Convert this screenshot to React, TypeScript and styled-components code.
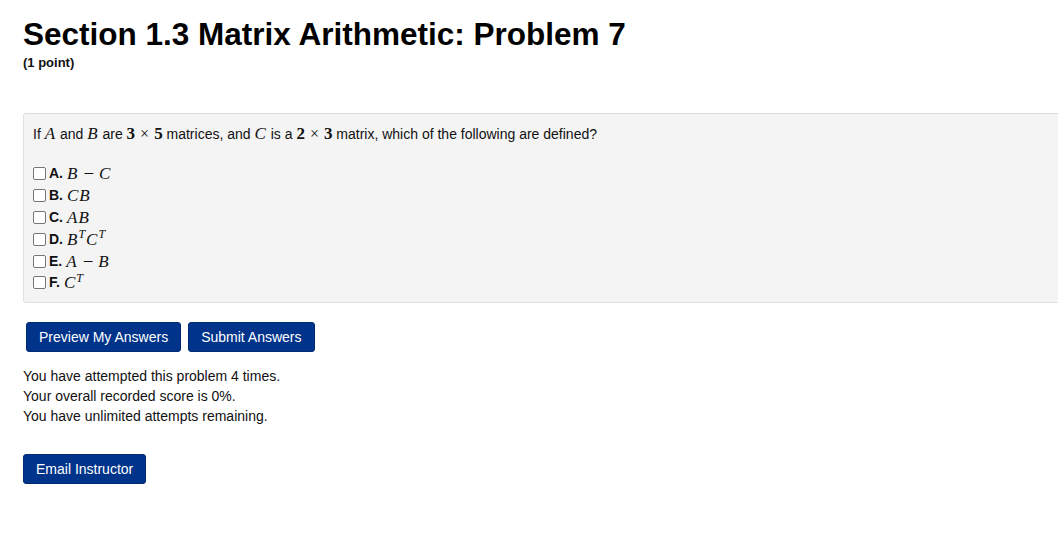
import React from "react";
import styled, { createGlobalStyle } from "styled-components";

const Global = createGlobalStyle`
  html, body { margin: 0; padding: 0; background: #fff; overflow: hidden; }
  body { font-family: "Liberation Sans", Arial, sans-serif; color: #111; }
`;

const Page = styled.div`
  width: 1100px;
  padding: 16px 0 40px 23px;
  box-sizing: border-box;
`;

const Title = styled.h1`
  margin: 0;
  font-size: 31.5px;
  font-weight: bold;
  line-height: 37px;
  color: #000;
`;

const Points = styled.div`
  margin-top: 3px;
  font-size: 13px;
  font-weight: bold;
  line-height: 14px;
`;

const Panel = styled.div`
  margin-top: 43px;
  background: #f4f4f4;
  border: 1px solid #e0e0e0;
  border-top-color: #dcdcdc;
  border-radius: 3px;
  padding: 9px 9px 8px 9px;
  font-size: 14px;
  line-height: 21px;
`;

const Question = styled.div`
  margin-bottom: 18px;
`;

const Options = styled.div`
  display: flex;
  flex-direction: column;
`;

const Option = styled.label`
  display: flex;
  align-items: center;
  height: 21.8px;
`;

const Box = styled.span`
  width: 11px;
  height: 11px;
  border: 1px solid #767676;
  border-radius: 2px;
  background: #fff;
  margin-right: 3px;
  flex: none;
`;

const Letter = styled.b`
  font-size: 14px;
  margin-right: 4px;
`;

const Var = styled.i`
  font-family: "Liberation Serif", "Times New Roman", serif;
  font-size: 17px;
  font-style: italic;
  padding-right: 1px;
`;

const Num = styled.span`
  font-family: "Liberation Serif", "Times New Roman", serif;
  font-size: 17px;
  font-weight: bold;
`;

const Op = styled.span<{ $w?: number; $s?: number }>`
  font-family: "Liberation Serif", "Times New Roman", serif;
  font-size: ${(p) => p.$s ?? 16}px;
  margin: 0 ${(p) => p.$w ?? 5}px;
`;

const Sup = styled.span`
  font-family: "Liberation Serif", "Times New Roman", serif;
  font-style: italic;
  font-size: 12px;
  line-height: 12px;
  position: relative;
  top: -5px;
  padding-right: 1px;
`;

const ButtonRow = styled.div`
  display: flex;
  gap: 7px;
  margin: 19px 0 0 3px;
`;

const Button = styled.button`
  height: 30px;
  padding: 0 12px;
  background: #00338a;
  color: #fff;
  border: 1px solid #002a72;
  border-radius: 3px;
  font-family: "Liberation Sans", Arial, sans-serif;
  font-size: 14px;
  cursor: pointer;
`;

const Info = styled.div`
  margin-top: 14px;
  font-size: 14px;
  line-height: 20px;
  color: #111;
`;

const EmailRow = styled.div`
  margin-top: 28px;
`;

const V = ({ children }: { children: React.ReactNode }) => <Var>{children}</Var>;

export default function App() {
  const options: [string, React.ReactNode][] = [
    ["A.", <><V>B</V><Op $w={5} $s={19}>−</Op><V>C</V></>],
    ["B.", <><V>C</V><V>B</V></>],
    ["C.", <><V>A</V><V>B</V></>],
    ["D.", <><V>B</V><Sup>T</Sup><V>C</V><Sup>T</Sup></>],
    ["E.", <><V>A</V><Op $w={5} $s={19}>−</Op><V>B</V></>],
    ["F.", <><V>C</V><Sup>T</Sup></>],
  ];
  return (
    <Page>
      <Global />
      <Title>Section 1.3 Matrix Arithmetic: Problem 7</Title>
      <Points>(1 point)</Points>
      <Panel>
        <Question>
          If <V>A</V> and <V>B</V> are <Num>3</Num><Op>×</Op><Num>5</Num> matrices, and{" "}
          <V>C</V> is a <Num>2</Num><Op>×</Op><Num>3</Num> matrix, which of the following are
          defined?
        </Question>
        <Options>
          {options.map(([l, m]) => (
            <Option key={l}>
              <Box />
              <Letter>{l}</Letter>
              {m}
            </Option>
          ))}
        </Options>
      </Panel>
      <ButtonRow>
        <Button>Preview My Answers</Button>
        <Button>Submit Answers</Button>
      </ButtonRow>
      <Info>
        You have attempted this problem 4 times.
        <br />
        Your overall recorded score is 0%.
        <br />
        You have unlimited attempts remaining.
      </Info>
      <EmailRow>
        <Button>Email Instructor</Button>
      </EmailRow>
    </Page>
  );
}
